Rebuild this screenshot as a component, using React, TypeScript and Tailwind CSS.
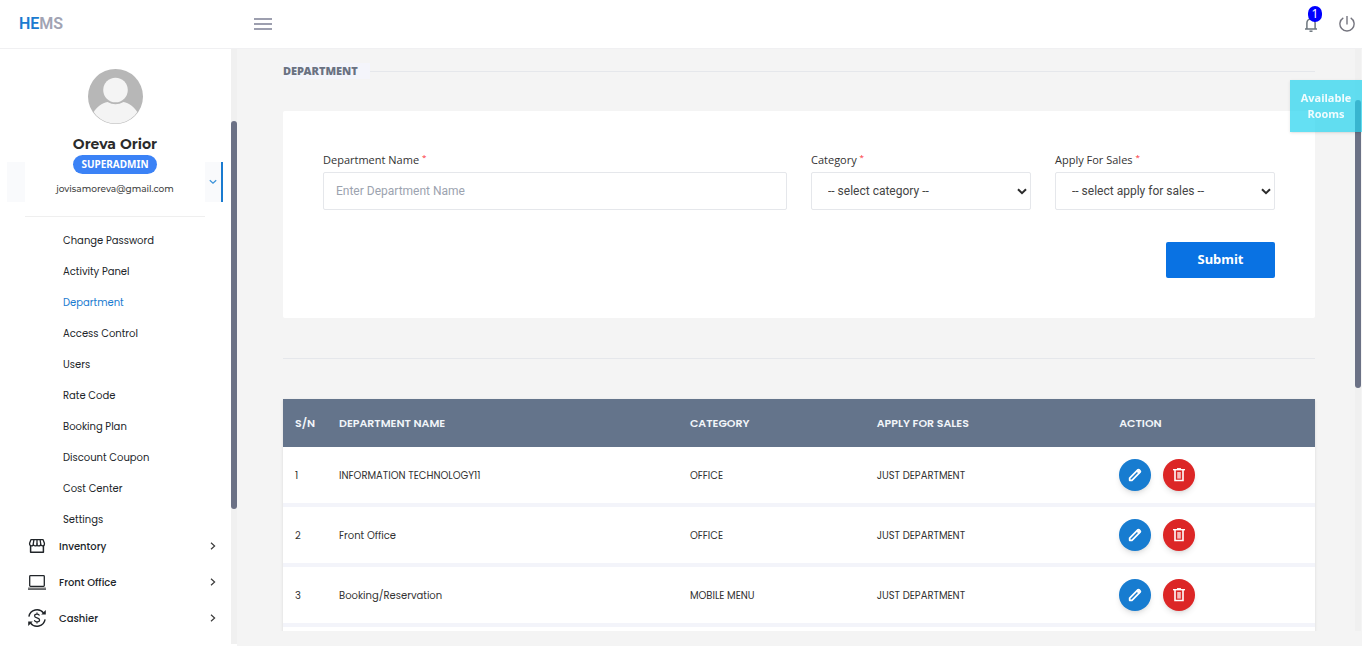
import React from "react";

const subItems = [
  "Change Password",
  "Activity Panel",
  "Department",
  "Access Control",
  "Users",
  "Rate Code",
  "Booking Plan",
  "Discount Coupon",
  "Cost Center",
  "Settings",
];

const departments = [
  { name: "INFORMATION TECHNOLOGY11", category: "OFFICE", sales: "JUST DEPARTMENT" },
  { name: "Front Office", category: "OFFICE", sales: "JUST DEPARTMENT" },
  { name: "Booking/Reservation", category: "MOBILE MENU", sales: "JUST DEPARTMENT" },
];

function StoreIcon() {
  return (
    <svg width="18" height="18" viewBox="0 0 18 18" fill="none" stroke="#212529" strokeWidth="1.3" strokeLinejoin="round">
      <path d="M2.9 2.700h12.200l1.300 3.600v.6a1.850 2 0 0 1-3.700 0 1.850 2 0 0 1-3.700 0 1.850 2 0 0 1-3.700 0 1.850 2 0 0 1-3.700 0v-.6z" />
      <path d="M5.900 2.700 5.300 6.900M9 2.700v4.200M12.100 2.700l.600 4.200" />
      <path d="M2.600 8.800v6.500h12.800V8.800" strokeWidth="1.500" />
    </svg>
  );
}

function LaptopIcon() {
  return (
    <svg width="18" height="18" viewBox="0 0 18 18" fill="none" stroke="#212529" strokeWidth="1.300">
      <rect x="1.700" y="2.700" width="14.600" height="10.600" rx="0.800" />
      <path d="M0 15.100h18" stroke="#8a8a8a" strokeWidth="1.400" />
      <path d="M0 16.200h18" strokeWidth="1" />
    </svg>
  );
}

function CashIcon() {
  return (
    <svg width="18" height="18" viewBox="0 0 18 18" fill="none" stroke="#212529" strokeWidth="1.400">
      <path d="M.9 7.600A8.200 8.200 0 0 1 15.600 4.200M17.100 10.400A8.200 8.200 0 0 1 2.400 13.800" />
      <path d="m17.800 1v4.600h-4.600zM.2 17v-4.600h4.600z" fill="#212529" stroke="none" />
      <path d="M11.400 6.700c-.2-1-1.200-1.500-2.400-1.500-1.400 0-2.400.7-2.400 1.800 0 2.700 5 1.200 5 4 0 1.200-1.100 1.900-2.600 1.900-1.400 0-2.400-.6-2.600-1.700M9 3.600v1.600M9 12.900v1.500" strokeWidth="1.200" />
    </svg>
  );
}

function ChevronRight() {
  return (
    <svg width="6" height="8" viewBox="0 0 6 8" fill="none" stroke="#3b3b3b" strokeWidth="1.200">
      <path d="m1 .8 3.600 3.200L1 7.200" />
    </svg>
  );
}

const modules = [
  { label: "Inventory", Icon: StoreIcon },
  { label: "Front Office", Icon: LaptopIcon },
  { label: "Cashier", Icon: CashIcon },
];

function Header() {
  return (
    <header className="flex h-[49px] shrink-0 items-center border-b border-[#f0f0f2] bg-white">
      <a href="#" className="w-[235px] pl-[19px] font-['Roboto',sans-serif] text-base font-semibold text-[#a1a3b3]">
        <span className="text-[#1a7bd0]">HE</span>MS
      </a>
      <button type="button" aria-label="Toggle menu" className="ml-[19px] flex w-[18px] flex-col gap-[3px]">
        <span className="h-[2px] bg-[#9d9faf]" />
        <span className="h-[2px] bg-[#9d9faf]" />
        <span className="h-[2px] bg-[#9d9faf]" />
      </button>
      <div className="ml-auto flex items-center gap-[22px] pr-[7px]">
        <button type="button" aria-label="Notifications" className="relative">
          <svg width="12" height="16" viewBox="0 0 12 16" fill="none" stroke="#6c757d" strokeWidth="1.500">
            <path d="M1.900 12.700V7a4.100 4.100 0 0 1 8.200 0v5.700M0 12.900h12" />
            <path d="M4.500 15.200h3" />
          </svg>
          <span className="absolute -top-[10px] left-[3px] flex h-4 w-[14px] items-center justify-center rounded-full bg-[#0000ff] font-['Noto_Sans',sans-serif] text-xs text-white">
            1
          </span>
        </button>
        <button type="button" aria-label="Log out">
          <svg width="16" height="16" viewBox="0 0 16 16" fill="none" stroke="#75757f" strokeWidth="1.400">
            <path d="M4.300 1.900a7.100 7.100 0 1 0 7.400 0M8 0v8.600" />
          </svg>
        </button>
      </div>
    </header>
  );
}

function Profile() {
  return (
    <div className="flex items-end px-[7px]">
      <span className="mb-[15px] h-10 w-[18px] bg-[#f9fafc]" />
      <div className="flex flex-1 flex-col items-center border-b border-[#efefef] pt-5 pb-[19px]">
        <svg width="55" height="55" viewBox="0 0 55 55" role="img" aria-label="User avatar">
          <defs>
            <clipPath id="face">
              <circle cx="27.500" cy="27.500" r="27" />
            </clipPath>
          </defs>
          <circle cx="27.500" cy="27.500" r="27.500" fill="#b7b7b7" />
          <path d="M5 44C9 37.500 14 34 19.500 33a16 16 0 0 0 16 0C41 34 46 37.500 50 44a27 27 0 0 1-45 0z" fill="#f4f4f4" clipPath="url(#face)" />
          <circle cx="27.500" cy="21" r="12.300" fill="#f4f4f4" />
        </svg>
        <h2 className="mt-[9px] font-['Montserrat','Inter',sans-serif] text-sm leading-[22px] font-bold text-[#2b2b2b]">Oreva Orior</h2>
        <span className="rounded-full bg-[#3b82f6] px-2 font-['Noto_Sans',sans-serif] text-[10px] leading-[19px] font-bold text-white">
          SUPERADMIN
        </span>
        <p className="mt-[7px] font-['Montserrat','Inter',sans-serif] text-[9px] leading-4 font-medium text-[#444]">jovisamoreva@gmail.com</p>
      </div>
      <button type="button" aria-label="Toggle profile menu" className="mb-[15px] flex h-10 w-[18px] items-center justify-center border-r-2 border-[#1a7bd0] bg-[#f9fafc]">
        <svg width="8" height="6" viewBox="0 0 8 6" fill="none" stroke="#3b93da" strokeWidth="1.300">
          <path d="m.8 1.200 3.200 3 3.200-3" />
        </svg>
      </button>
    </div>
  );
}

function Sidebar() {
  return (
    <aside className="flex shrink-0 bg-white">
      <div className="w-[231px] overflow-hidden font-['Poppins','Inter',sans-serif] text-[10px] text-[#212529]">
        <div className="pr-px">
          <Profile />
        </div>
        <ul className="flex flex-col gap-4 pt-4 pb-px pl-[63px] leading-[15px]">
          {subItems.map((item) => (
            <li key={item}>
              <a href="#" className={item === "Department" ? "block text-[#1a7bd0]" : "block"}>
                {item}
              </a>
            </li>
          ))}
        </ul>
        <ul className="font-medium">
          {modules.map(({ label, Icon }) => (
            <li key={label}>
              <a href="#" className="flex h-9 items-center pr-[15px] pl-7">
                <Icon />
                <span className="ml-[13px] flex-1">{label}</span>
                <ChevronRight />
              </a>
            </li>
          ))}
        </ul>
      </div>
      <div className="mb-[2px] w-[6px] bg-[#f0f0f0] pt-[72px]">
        <div className="h-[388px] rounded-full bg-[#6b7185]" />
      </div>
    </aside>
  );
}

function Label({ htmlFor, children }: { htmlFor: string; children: React.ReactNode }) {
  return (
    <label htmlFor={htmlFor} className="mb-[3px] block font-['Open_Sans',sans-serif] text-[11px] leading-[18px] text-[#333]">
      {children} <sup className="text-[8px] leading-none text-red-500">*</sup>
    </label>
  );
}

function SelectField({ id, label, placeholder }: { id: string; label: string; placeholder: string }) {
  return (
    <div>
      <Label htmlFor={id}>{label}</Label>
      <div className="relative">
        <select id={id} className="h-[38px] w-full appearance-none rounded-[2px] border border-gray-200 bg-white pl-4 font-['Roboto',sans-serif] text-xs text-[#444]">
          <option>{placeholder}</option>
        </select>
        <svg className="pointer-events-none absolute top-4 right-[4px]" width="10" height="7" viewBox="0 0 10 7" fill="none" stroke="#2b2b2b" strokeWidth="2">
          <path d="m1 1.200 4 4 4-4" />
        </svg>
      </div>
    </div>
  );
}

function DepartmentForm() {
  return (
    <form className="rounded-[2px] bg-white p-10">
      <div className="grid grid-cols-4 gap-6">
        <div className="col-span-2">
          <Label htmlFor="name">Department Name</Label>
          <input
            id="name"
            type="text"
            placeholder="Enter Department Name"
            className="h-[38px] w-full rounded-[2px] border border-gray-200 bg-white px-3 font-['Roboto',sans-serif] text-xs placeholder:text-[#9ca3af]"
          />
        </div>
        <SelectField id="category" label="Category" placeholder="-- select category --" />
        <SelectField id="sales" label="Apply For Sales" placeholder="-- select apply for sales --" />
      </div>
      <div className="mt-8 flex justify-end">
        <button type="button" className="h-9 w-[109px] rounded-[2px] bg-[#0972e3] font-['Noto_Sans',sans-serif] text-[13px] font-bold text-white">
          Submit
        </button>
      </div>
    </form>
  );
}

function RowActions() {
  return (
    <div className="flex gap-3">
      <button type="button" aria-label="Edit" className="flex size-8 items-center justify-center rounded-full bg-[#177cd0] shadow-md">
        <svg width="16" height="16" viewBox="0 0 24 24" fill="none" stroke="white" strokeWidth="2.600" strokeLinejoin="round">
          <path d="M4 20v-3.400L16.200 4.400a1.500 1.500 0 0 1 2.100 0l1.300 1.300a1.500 1.500 0 0 1 0 2.100L7.400 20z" />
          <path d="m14.200 6.200 3.600 3.600 2-2-3.600-3.600z" fill="white" strokeWidth="1" />
        </svg>
      </button>
      <button type="button" aria-label="Delete" className="flex size-8 items-center justify-center rounded-full bg-[#dc2626] shadow-md">
        <svg width="12" height="14" viewBox="0 0 12 14" fill="none" stroke="white">
          <path d="M0 1.700h12" strokeWidth="1.400" />
          <path d="M4 .7h4" strokeWidth="1.200" />
          <path d="M2 2v10.500h8V2" strokeWidth="1.600" />
          <path d="M6 4v6.600" strokeWidth="3.600" opacity="0.700" />
        </svg>
      </button>
    </div>
  );
}

function DepartmentTable() {
  const cell = "border-b-4 border-[#f3f4fa] px-3";
  return (
    <div className="bg-white pb-10 shadow-sm">
      <table className="w-full table-fixed border-separate border-spacing-0 text-left font-['Poppins','Inter',sans-serif] text-[10px] text-[#333]">
        <colgroup>
          <col className="w-[44px]" />
          <col className="w-[34%]" />
          <col className="w-[18.1%]" />
          <col className="w-[23.5%]" />
          <col />
        </colgroup>
        <thead className="bg-[#64748b] text-[11px] text-slate-100">
          <tr className="h-12">
            {["S/N", "DEPARTMENT NAME", "CATEGORY", "APPLY FOR SALES", "ACTION"].map((h) => (
              <th key={h} scope="col" className="px-3 font-semibold whitespace-nowrap">
                {h}
              </th>
            ))}
          </tr>
        </thead>
        <tbody>
          {departments.map((d, i) => (
            <tr key={d.name} className="h-[60px]">
              <td className={cell}>{i + 1}</td>
              <td className={cell}>{d.name}</td>
              <td className={cell}>{d.category}</td>
              <td className={cell}>{d.sales}</td>
              <td className={cell}>
                <RowActions />
              </td>
            </tr>
          ))}
        </tbody>
      </table>
    </div>
  );
}

export default function App() {
  return (
    <div className="flex h-screen flex-col overflow-hidden bg-[#f4f4f4]">
      <Header />
      <div className="flex min-h-0 flex-1">
        <Sidebar />
        <div className="flex min-w-0 flex-1 pr-px pb-[15px]">
          <main className="min-w-0 flex-1 overflow-hidden pt-[14px] pr-10 pl-[46px]">
            <div className="flex items-center">
              <h1 className="bg-[#f4f5fb] pr-3 font-['Noto_Sans',sans-serif] text-[11px] leading-4 font-black text-gray-500">
                DEPARTMENT
              </h1>
              <span className="h-px flex-1 bg-gray-200" />
            </div>
            <div className="mt-8">
              <DepartmentForm />
            </div>
            <hr className="my-10 border-gray-200" />
            <DepartmentTable />
          </main>
          <div className="w-[6px] bg-[#f0f0f0] pt-[51px]">
            <div className="h-72 rounded-full bg-[#6b7185]" />
          </div>
        </div>
      </div>
      <button type="button" className="fixed top-20 right-0 h-[52px] w-[72px] bg-[#22d3ee]/70 font-['Open_Sans',sans-serif] text-[11px] leading-4 font-bold text-white/90 shadow-sm">
        Available Rooms
      </button>
    </div>
  );
}
